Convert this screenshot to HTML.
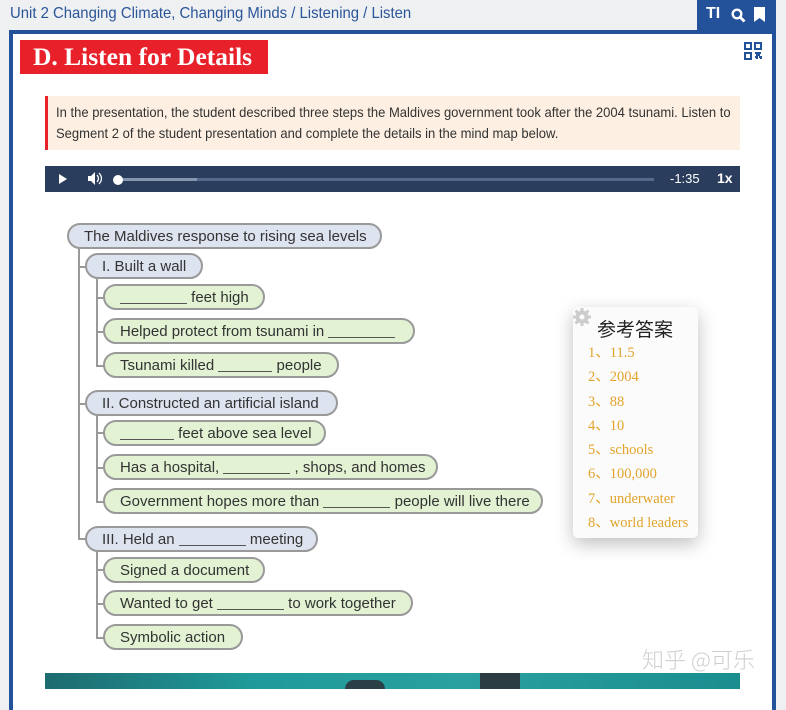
<!DOCTYPE html>
<html><head><meta charset="utf-8"><style>
*{margin:0;padding:0;box-sizing:border-box}
body{width:786px;height:689px;overflow:hidden;background:#eef0f2;font-family:"Liberation Sans",sans-serif;position:relative}
.crumb{position:absolute;left:10px;top:5px;font-size:16px;color:#2a5599;transform-origin:0 0;transform:scaleX(0.93);white-space:nowrap;width:470px}
.tools{position:absolute;left:697px;top:0;width:79px;height:30px;background:#23519a;color:#fff;font-weight:bold;font-size:16px}
.frame{position:absolute;left:9px;top:30px;width:767px;height:680px;border:4px solid #23519a;border-bottom:none;background:#fff}
.title{position:absolute;left:20px;top:40px;width:248px;height:34px;background:#e8202a;color:#fff;font-family:"Liberation Serif",serif;font-weight:bold;font-size:25.5px;line-height:34px;padding-left:13px;white-space:nowrap;overflow:hidden}
.desc{position:absolute;left:45px;top:96px;width:695px;height:54px;background:#fdf0e2;border-left:3px solid #e8202a}
.desc div{position:absolute;left:8px;top:6px;width:733px;font-size:14px;color:#333;line-height:21px;transform-origin:0 0;transform:scaleX(0.93)}
.player{position:absolute;left:45px;top:166px;width:695px;height:26px;background:#2a3d5c;color:#fff;font-size:13px}
.n{position:absolute;height:26px;border:2px solid #999;border-radius:13px;font-size:15px;color:#333;line-height:22px;padding-left:15px;padding-top:1px;white-space:nowrap}
.h{background:#dde3ef}.g{background:#e2f2d3}
.b{display:inline-block;border-bottom:1px solid #555;height:17px;vertical-align:top}
.l{position:absolute;background:#999}
.ans{position:absolute;left:573px;top:307px;width:125px;height:231px;background:#fbfbfb;border-radius:5px;box-shadow:0 6px 18px rgba(0,0,0,.25)}
.ans p{font-family:"Liberation Serif",serif;color:#e2a42c;font-size:14.5px;line-height:24.3px;padding-left:15px;white-space:nowrap}
</style></head><body>
<div class="crumb">Unit 2 Changing Climate, Changing Minds / Listening / Listen</div>
<div class="tools"><span style="position:absolute;left:9px;top:5px">TI</span>
<svg style="position:absolute;left:34px;top:8px" width="15" height="15" viewBox="0 0 15 15"><circle cx="6" cy="6" r="4.3" fill="none" stroke="#fff" stroke-width="2.4"/><path d="M9 9l4.5 4.5" stroke="#fff" stroke-width="2.8"/></svg>
<svg style="position:absolute;left:57px;top:7px" width="11" height="15" viewBox="0 0 11 15"><path d="M0 0h11v15l-5.5-4L0 15z" fill="#fff"/></svg></div>
<div class="frame"></div>
<div class="title">D. Listen for Details</div>
<svg style="position:absolute;left:744px;top:42px" width="18" height="18" viewBox="0 0 18 18" fill="none" stroke="#23519a" stroke-width="2"><rect x="1" y="1" width="6" height="6"/><rect x="11" y="1" width="6" height="6"/><rect x="1" y="11" width="6" height="6"/><path d="M11 11h2v2h2v-2h2M11 15h2v2M15 15h2v2"/></svg>
<div class="desc"><div>In the presentation, the student described three steps the Maldives government took after the 2004 tsunami. Listen to Segment 2 of the student presentation and complete the details in the mind map below.</div></div>
<div class="player">
<svg style="position:absolute;left:14px;top:8px" width="8" height="10"><path d="M0 0l8 5-8 5z" fill="#fff"/></svg>
<svg style="position:absolute;left:43px;top:6px" width="14" height="13"><path d="M0 4h3l4-4v13l-4-4H0z" fill="#fff"/><path d="M9 3q3 3.5 0 7M11 1q5 5.5 0 11" stroke="#fff" fill="none" stroke-width="1.3"/></svg>
<div style="position:absolute;left:72px;top:12px;width:537px;height:3px;background:#556a8a"></div>
<div style="position:absolute;left:72px;top:12px;width:80px;height:3px;background:#8596b0"></div>
<div style="position:absolute;left:68px;top:9px;width:10px;height:10px;border-radius:50%;background:#fff"></div>
<span style="position:absolute;left:625px;top:5px">-1:35</span>
<span style="position:absolute;left:672px;top:4px;font-weight:bold;font-size:14px">1x</span></div>

<div class="l" style="left:78px;top:249px;width:2px;height:290px"></div>
<div class="l" style="left:78px;top:266px;width:8px;height:2px"></div>
<div class="l" style="left:78px;top:403px;width:8px;height:2px"></div>
<div class="l" style="left:78px;top:538px;width:8px;height:2px"></div>
<div class="l" style="left:96px;top:279px;width:2px;height:87px"></div>
<div class="l" style="left:96px;top:297px;width:8px;height:2px"></div>
<div class="l" style="left:96px;top:331px;width:8px;height:2px"></div>
<div class="l" style="left:96px;top:365px;width:8px;height:2px"></div>
<div class="l" style="left:96px;top:416px;width:2px;height:86px"></div>
<div class="l" style="left:96px;top:432px;width:8px;height:2px"></div>
<div class="l" style="left:96px;top:467px;width:8px;height:2px"></div>
<div class="l" style="left:96px;top:501px;width:8px;height:2px"></div>
<div class="l" style="left:96px;top:552px;width:2px;height:87px"></div>
<div class="l" style="left:96px;top:569px;width:8px;height:2px"></div>
<div class="l" style="left:96px;top:603px;width:8px;height:2px"></div>
<div class="l" style="left:96px;top:637px;width:8px;height:2px"></div>

<div class="n h" style="left:67px;top:223px;width:315px">The Maldives response to rising sea levels</div>
<div class="n h" style="left:85px;top:253px;width:118px">I. Built a wall</div>
<div class="n g" style="left:103px;top:284px;width:162px"><span class="b" style="width:67px"></span> feet high</div>
<div class="n g" style="left:103px;top:318px;width:312px">Helped protect from tsunami in <span class="b" style="width:67px"></span></div>
<div class="n g" style="left:103px;top:352px;width:236px">Tsunami killed <span class="b" style="width:54px"></span> people</div>
<div class="n h" style="left:85px;top:390px;width:253px">II. Constructed an artificial island</div>
<div class="n g" style="left:103px;top:420px;width:223px"><span class="b" style="width:54px"></span> feet above sea level</div>
<div class="n g" style="left:103px;top:454px;width:335px">Has a hospital, <span class="b" style="width:67px"></span> , shops, and homes</div>
<div class="n g" style="left:103px;top:488px;width:440px">Government hopes more than <span class="b" style="width:67px"></span> people will live there</div>
<div class="n h" style="left:85px;top:526px;width:233px">III. Held an <span class="b" style="width:67px"></span> meeting</div>
<div class="n g" style="left:103px;top:557px;width:162px">Signed a document</div>
<div class="n g" style="left:103px;top:590px;width:310px">Wanted to get <span class="b" style="width:67px"></span> to work together</div>
<div class="n g" style="left:103px;top:624px;width:140px">Symbolic action</div>

<div class="ans">
<svg style="position:absolute;left:-1px;top:0px" width="20" height="20" viewBox="0 0 20 20"><g fill="#ccc"><circle cx="10" cy="10" r="6.5"/><g stroke="#ccc" stroke-width="3"><path d="M10 1v18M1 10h18M3.6 3.6l12.8 12.8M16.4 3.6L3.6 16.4"/></g></g><circle cx="10" cy="10" r="2.5" fill="#fbfbfb"/></svg>
<div style="position:absolute;left:24px;top:8px;font-family:'Noto Sans CJK SC',sans-serif;font-size:19px;color:#222">参考答案</div>
<div style="position:absolute;top:34px;left:0">
<p>1、11.5</p><p>2、2004</p><p>3、88</p><p>4、10</p><p>5、schools</p><p>6、100,000</p><p>7、underwater</p><p>8、world leaders</p></div></div>
<div style="position:absolute;left:642px;top:643px;font-family:'Noto Sans CJK SC',sans-serif;font-size:22px;font-weight:300;color:#cfcfcf">知乎 @可乐</div>
<div style="position:absolute;left:45px;top:673px;width:695px;height:16px;background:linear-gradient(90deg,#1d6b6f,#1f9a9a 30%,#2aa0a0 60%,#1a8d8f)"></div>
<div style="position:absolute;left:345px;top:680px;width:40px;height:9px;background:#2b4046;border-radius:10px 10px 0 0"></div>
<div style="position:absolute;left:480px;top:673px;width:40px;height:16px;background:#2b3d42"></div>
</body></html>
